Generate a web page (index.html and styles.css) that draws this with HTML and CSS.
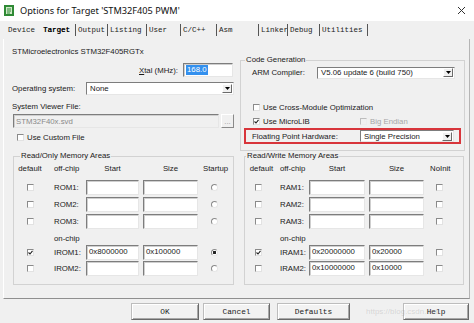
FILE: index.html
```html
<!DOCTYPE html>
<html lang="en">
<head>
  <meta charset="UTF-8">
  <title>Options for Target 'STM32F405 PWM'</title>
  <link rel="stylesheet" href="styles.css">
</head>
<body>

  <div class="titlebar">
    <svg class="app-icon" width="10" height="11" viewBox="0 0 10 11">
      <rect x="0" y="0" width="10" height="11" fill="#2f8a35"/>
      <rect x="2" y="2" width="6" height="7" fill="#cfe8c8"/>
      <path d="M3 4h4M3 6h4M3 8h3" stroke="#2f8a35" stroke-width="1"/>
    </svg>
    <span class="title">Options for Target 'STM32F405 PWM'</span>
    <svg class="close" width="9" height="9" viewBox="0 0 9 9">
      <path d="M1 1L8 8M8 1L1 8" stroke="#333" stroke-width="1"/>
    </svg>
  </div>

  <div class="tabs">
    <span class="tab t-device">Device</span>
    <span class="tab t-target active">Target</span>
    <span class="tab sep t-output">Output</span>
    <span class="tab sep t-listing">Listing</span>
    <span class="tab sep t-user">User</span>
    <span class="tab sep t-cc">C/C++</span>
    <span class="tab sep t-asm">Asm</span>
    <span class="tab sep t-linker">Linker</span>
    <span class="tab sep t-debug">Debug</span>
    <span class="tab sep t-util">Utilities</span>
    <span class="tab sep"></span>
  </div>

  <div class="panel">
    <div class="top">
      <div class="left-col">
        <div class="chip">STMicroelectronics STM32F405RGTx</div>
        <div class="xtal-row">
          <span><u>X</u>tal (MHz):</span>
          <span class="edit xtal"><span class="selected">168.0</span></span>
        </div>
        <div class="os-row">
          <span class="os-label">Operating system:</span>
          <span class="combo os">None<span class="drop"><svg width="5" height="3" viewBox="0 0 5 3"><path d="M0 0h5L2.5 3z" fill="#000"/></svg></span></span>
        </div>
        <div class="svd-label">System Viewer File:</div>
        <div class="svd-row">
          <span class="edit disabled svd">STM32F40x.svd</span>
          <span class="browse">...</span>
        </div>
        <div class="check-row custom"><span class="cb"></span>Use Custom File</div>
      </div>

      <fieldset class="group codegen">
        <legend>Code Generation</legend>
        <div class="cg-body">
          <div class="cg-row arm">
            <span class="arm-label">ARM Compiler:</span>
            <span class="combo arm-combo">V5.06 update 6 (build 750)<span class="drop"><svg width="5" height="3" viewBox="0 0 5 3"><path d="M0 0h5L2.5 3z" fill="#000"/></svg></span></span>
          </div>
          <div class="cg-row check-row xmo"><span class="cb"></span>Use Cross-Module Optimization</div>
          <div class="cg-row check-row mlib">
            <span class="check-row opt-a"><span class="cb"><svg width="5" height="5" viewBox="0 0 5 5"><path d="M0.5 2.5L2 4L4.5 0.8" stroke="#222" stroke-width="1.1" fill="none"/></svg></span>Use MicroLIB</span>
            <span class="check-row off"><span class="cb dis"></span>Big Endian</span>
          </div>
          <div class="fph">
            <span class="fph-label">Floating Point Hardware:</span>
            <span class="combo fph-combo">Single Precision<span class="drop"><svg width="5" height="3" viewBox="0 0 5 3"><path d="M0 0h5L2.5 3z" fill="#000"/></svg></span></span>
          </div>
        </div>
      </fieldset>
    </div>

    <div class="memory">
      <fieldset class="group ro">
        <legend>Read/Only Memory Areas</legend>
        <div class="mem-row mem-head">
          <span class="c1">default</span>
          <span class="c2">off-chip</span>
          <span class="c3 hd">Start</span>
          <span class="c4 hd">Size</span>
          <span class="c5">Startup</span>
        </div>
        <div class="mem-row first">
          <span class="c1"><span class="cb"></span></span>
          <span class="c2">ROM1:</span>
          <span class="c3 edit"></span>
          <span class="c4 edit"></span>
          <span class="c5"><span class="radio"></span></span>
        </div>
        <div class="mem-row">
          <span class="c1"><span class="cb"></span></span>
          <span class="c2">ROM2:</span>
          <span class="c3 edit"></span>
          <span class="c4 edit"></span>
          <span class="c5"><span class="radio"></span></span>
        </div>
        <div class="mem-row">
          <span class="c1"><span class="cb"></span></span>
          <span class="c2">ROM3:</span>
          <span class="c3 edit"></span>
          <span class="c4 edit"></span>
          <span class="c5"><span class="radio"></span></span>
        </div>
        <div class="mem-row onchip"><span class="c2">on-chip</span></div>
        <div class="mem-row chip-row">
          <span class="c1"><span class="cb"><svg width="5" height="5" viewBox="0 0 5 5"><path d="M0.5 2.5L2 4L4.5 0.8" stroke="#222" stroke-width="1.1" fill="none"/></svg></span></span>
          <span class="c2">IROM1:</span>
          <span class="c3 edit">0x8000000</span>
          <span class="c4 edit">0x100000</span>
          <span class="c5"><span class="radio on"></span></span>
        </div>
        <div class="mem-row chip-row">
          <span class="c1"><span class="cb"></span></span>
          <span class="c2">IROM2:</span>
          <span class="c3 edit"></span>
          <span class="c4 edit"></span>
          <span class="c5"><span class="radio"></span></span>
        </div>
      </fieldset>

      <fieldset class="group rw">
        <legend>Read/Write Memory Areas</legend>
        <div class="mem-row mem-head">
          <span class="c1">default</span>
          <span class="c2">off-chip</span>
          <span class="c3 hd">Start</span>
          <span class="c4 hd">Size</span>
          <span class="c5">NoInit</span>
        </div>
        <div class="mem-row first">
          <span class="c1"><span class="cb"></span></span>
          <span class="c2">RAM1:</span>
          <span class="c3 edit"></span>
          <span class="c4 edit"></span>
          <span class="c5"><span class="cb"></span></span>
        </div>
        <div class="mem-row">
          <span class="c1"><span class="cb"></span></span>
          <span class="c2">RAM2:</span>
          <span class="c3 edit"></span>
          <span class="c4 edit"></span>
          <span class="c5"><span class="cb"></span></span>
        </div>
        <div class="mem-row">
          <span class="c1"><span class="cb"></span></span>
          <span class="c2">RAM3:</span>
          <span class="c3 edit"></span>
          <span class="c4 edit"></span>
          <span class="c5"><span class="cb"></span></span>
        </div>
        <div class="mem-row onchip"><span class="c2">on-chip</span></div>
        <div class="mem-row chip-row">
          <span class="c1"><span class="cb"><svg width="5" height="5" viewBox="0 0 5 5"><path d="M0.5 2.5L2 4L4.5 0.8" stroke="#222" stroke-width="1.1" fill="none"/></svg></span></span>
          <span class="c2">IRAM1:</span>
          <span class="c3 edit">0x20000000</span>
          <span class="c4 edit">0x20000</span>
          <span class="c5"><span class="cb"></span></span>
        </div>
        <div class="mem-row chip-row">
          <span class="c1"><span class="cb"></span></span>
          <span class="c2">IRAM2:</span>
          <span class="c3 edit">0x10000000</span>
          <span class="c4 edit">0x10000</span>
          <span class="c5"><span class="cb"></span></span>
        </div>
      </fieldset>
    </div>
  </div>

  <div class="buttons">
    <button class="btn ok">OK</button>
    <button class="btn cancel">Cancel</button>
    <button class="btn defaults">Defaults</button>
    <button class="btn help">Help</button>
  </div>

  <div class="watermark">https://blog.csdn.net/</div>

</body>
</html>
```

FILE: styles.css
```css
body {
  margin: 0;
  width: 474px;
  height: 323px;
  overflow: hidden;
  background: #f0f0f0;
  font-family: "Liberation Sans", Arial, sans-serif;
  font-size: 7.8px;
  color: #1a1a1a;
}

/* title bar */
.titlebar {
  height: 21px;
  background: #fff;
  display: flex;
  align-items: center;
  padding: 0 8px 0 4px;
}
.app-icon { margin-right: 6px; }
.title {
  font-family: "Noto Sans", sans-serif;
  font-size: 9.2px;
  color: #111;
}
.close { margin-left: auto; }

/* tab strip */
.tabs {
  height: 18px;
  display: flex;
  align-items: center;
  padding-left: 6px;
  font-family: "Liberation Mono", monospace;
  font-size: 7.5px;
  color: #222;
}
.tab {
  height: 12px;
  line-height: 12px;
  padding-left: 2px;
  box-sizing: border-box;
  white-space: pre;
}
.tab.sep { border-left: 1px solid #555; }
.tab.active { color: #000; text-shadow: 0.3px 0 0 #000; }
.t-device { width: 37px; }
.t-target { width: 32px; padding-left: 0; }
.t-output { width: 32px; }
.t-listing { width: 39px; }
.t-user { width: 34px; }
.t-cc { width: 36px; }
.t-asm { width: 42px; }
.t-linker { width: 29px; }
.t-debug { width: 32px; }
.t-util { width: 48px; }

/* main page */
.panel {
  height: 260px;
  box-sizing: border-box;
  margin: 0 4px 0 3px;
  border-left: 1px solid #fff;
  border-right: 1px solid #b5b5b5;
  border-bottom: 1px solid #8f8f8f;
  padding-left: 8px;
}
.top {
  display: grid;
  grid-template-columns: 222px 225px;
  column-gap: 6px;
  height: 112px;
}

/* common controls */
.edit {
  display: block;
  box-sizing: border-box;
  height: 15px;
  background: #fff;
  border: 1px solid;
  border-color: #7d7d7d #e6e6e6 #e6e6e6 #7d7d7d;
  box-shadow: inset 1px 1px 0 #cfcfcf;
  padding: 1px 0 0 2px;
  line-height: 10px;
  white-space: nowrap;
  overflow: hidden;
}
.edit.disabled {
  background: #f0f0f0;
  color: #8a8a8a;
  line-height: 12px;
}
.combo {
  display: flex;
  align-items: center;
  box-sizing: border-box;
  background: #fff;
  border: 1px solid;
  border-color: #7d7d7d #e6e6e6 #e6e6e6 #7d7d7d;
  padding-left: 3px;
  white-space: nowrap;
}
.drop {
  margin-left: auto;
  margin-right: 1px;
  width: 10px;
  height: 9px;
  box-sizing: border-box;
  background: #f0f0f0;
  border: 1px solid;
  border-color: #fff #6a6a6a #6a6a6a #fff;
  display: flex;
  align-items: center;
  justify-content: center;
}
.check-row {
  display: flex;
  align-items: center;
}
.cb {
  display: inline-flex;
  align-items: center;
  justify-content: center;
  width: 7px;
  height: 7px;
  box-sizing: border-box;
  background: #fff;
  border: 1px solid;
  border-color: #8a8a8a #e2e2e2 #e2e2e2 #8a8a8a;
  margin-right: 3px;
}
.cb.dis {
  background: #f0f0f0;
  border-color: #bdbdbd #ececec #ececec #bdbdbd;
}
.radio {
  display: inline-block;
  width: 7px;
  height: 7px;
  box-sizing: border-box;
  border-radius: 50%;
  background: #fff;
  border: 1px solid;
  border-color: #8a8a8a #e6e6e6 #e6e6e6 #8a8a8a;
}
.radio.on {
  background: radial-gradient(circle, #222 0 1.4px, #fff 1.8px);
}

/* left column */
.chip {
  margin-top: 7px;
  height: 12px;
  line-height: 12px;
}
.xtal-row {
  margin-top: 5px;
  height: 14px;
  display: flex;
  justify-content: flex-end;
  align-items: center;
}
.xtal {
  width: 50px;
  height: 14px;
  margin: 0 1px 0 5px;
  padding-top: 1px;
}
.selected {
  display: inline-block;
  background: #3390ee;
  color: #fff;
  padding: 0 1px;
  line-height: 10px;
}
.os-row {
  margin-top: 5px;
  height: 13px;
  display: flex;
  align-items: center;
}
.os-label { width: 74px; }
.os { width: 148px; height: 13px; }
.svd-label {
  margin-top: 6px;
  height: 12px;
  line-height: 12px;
}
.svd-row {
  margin-top: 1px;
  height: 14px;
  display: flex;
}
.svd {
  width: 206px;
  height: 14px;
  margin-left: 1px;
}
.browse {
  width: 13px;
  height: 14px;
  margin-left: 2px;
  box-sizing: border-box;
  border: 1px solid;
  border-color: #fff #8a8a8a #8a8a8a #fff;
  color: #9a9a9a;
  text-align: center;
  line-height: 14px;
}
.custom {
  margin-top: 4px;
  height: 11px;
  padding-left: 5px;
}

/* group boxes */
.group {
  margin: 0;
  padding: 0;
  min-width: 0;
  box-sizing: border-box;
  border: 1px solid #d2d2d2;
}
.group legend {
  padding: 0 1px;
  line-height: 10px;
  font-size: 7.8px;
}
.codegen { margin-top: 16px; }
.codegen legend { margin-left: 4px; }
.cg-body { padding: 0 3px 2px 3px; }
.cg-row {
  display: flex;
  align-items: center;
  padding-left: 8px;
}
.arm { margin-top: 1px; height: 13px; }
.arm-label { width: 65px; }
.arm-combo { width: 138px; height: 12px; }
.xmo { margin-top: 22px; height: 12px; padding-left: 9px; }
.mlib { margin-top: 2px; height: 12px; padding-left: 9px; }
.opt-a { width: 107px; }
.off { color: #a6a6a6; }
.fph {
  margin-top: 1px;
  height: 16px;
  box-sizing: border-box;
  border: 2px solid #d8353b;
  padding-left: 6px;
  display: flex;
  align-items: center;
}
.fph-label { width: 108px; }
.fph-combo { width: 94px; height: 12px; }

/* memory areas */
.memory { display: flex; }
.ro { margin-left: 1px; width: 221px; padding-bottom: 8px; }
.ro legend { margin-left: 6px; }
.rw { margin-left: 10px; width: 220px; padding-bottom: 8px; }
.rw legend { margin-left: 1px; }

.mem-row {
  display: grid;
  align-items: center;
  height: 17px;
}
.ro .mem-row { grid-template-columns: 32px 40px 57px 59px 31px; }
.rw .mem-row { grid-template-columns: 33px 31px 60px 59px 35px; }
.mem-head { height: 14px; }
.mem-row.first { margin-top: 4px; }
.mem-row.onchip {
  height: 14px;
  padding-top: 4px;
  box-sizing: border-box;
  line-height: 10px;
}
.mem-row.chip-row { height: 16px; }

.c1 { grid-column: 1; text-align: center; display: flex; justify-content: center; }
.c2 { grid-column: 2; }
.c3 { grid-column: 3; }
.c4 { grid-column: 4; }
.c5 { grid-column: 5; display: flex; }
.hd { text-align: center; }
.cb, .radio { flex: none; }
.c1 .cb { margin-right: 0; }

.ro .c2 { padding-left: 8px; }
.ro .c3 { width: 53px; }
.ro .c4 { width: 55px; }
.ro .c5 { padding-left: 1px; }
.ro .c5 .radio { margin-left: 8px; }

.rw .c1 .cb { margin-left: -7px; }
.rw .c2 { padding-left: 2px; }
.rw .c3 { width: 56px; }
.rw .c4 { width: 55px; }
.rw .c5 { padding-left: 2px; }
.rw .c5 .cb { margin-left: 6px; }

/* dialog buttons */
.buttons {
  display: flex;
  margin-top: 4px;
  padding: 0 5px 0 131px;
}
.btn {
  height: 17px;
  padding: 0;
  font-family: "Liberation Mono", monospace;
  font-size: 7.8px;
  color: #222;
  background: #f2f2f2;
  border: 1px solid;
  border-color: #bdbdbd #6a6a6a #6a6a6a #bdbdbd;
  box-shadow: inset 1px 1px 0 #fff, inset -1px -1px 0 #a8a8a8;
}
.ok { width: 68px; }
.cancel { width: 67px; margin-left: 4px; }
.defaults { width: 73px; margin-left: 7px; }
.help { width: 66px; margin-left: auto; }

.watermark {
  position: absolute;
  left: 366px;
  top: 307px;
  font-family: "Liberation Sans", Arial, sans-serif;
  font-size: 8px;
  color: rgba(150, 150, 150, 0.3);
  pointer-events: none;
}
```
